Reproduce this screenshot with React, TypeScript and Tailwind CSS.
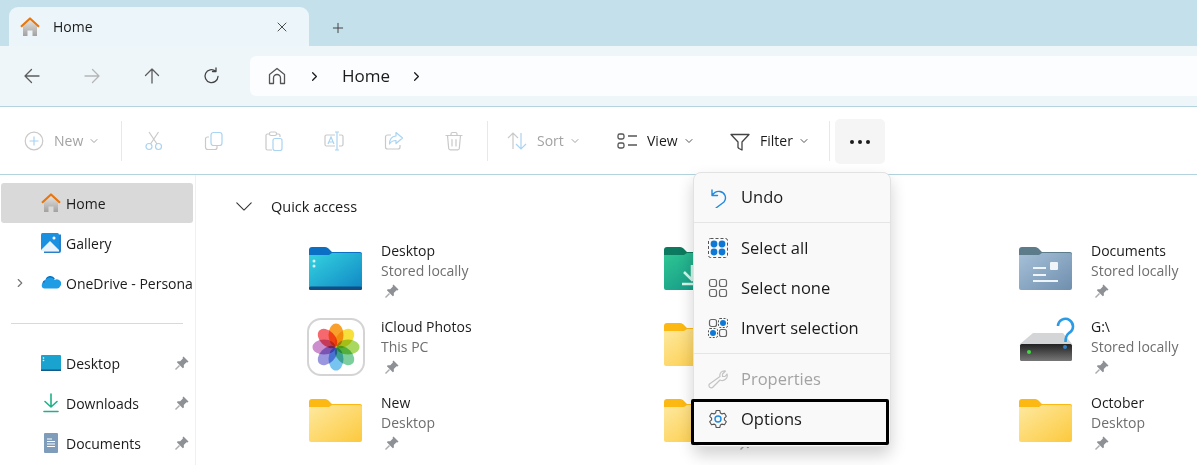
import { ChevronDown, ChevronRight, Plus, X } from 'lucide-react'
import type { ReactNode } from 'react'

const blue = '#a9d4f2'
const grey = '#c9c9c9'

function HomeColor({ size = 20 }: { size?: number }) {
  return (
    <svg width={size} height={size} viewBox="0 0 20 20" className="shrink-0">
      <defs>
        <linearGradient id="hg" x1="0" y1="0" x2="0" y2="1">
          <stop offset="0" stopColor="#e4e2e0" />
          <stop offset="1" stopColor="#a3a1a0" />
        </linearGradient>
      </defs>
      <path d="M3 9.500 10 3l7 6.500V19h-4.500v-5.500h-5V19H3z" fill="url(#hg)" />
      <path d="M1 9.800 10 1.500l9 8.300" fill="none" stroke="#e8760c" strokeWidth="2.200" strokeLinejoin="round" />
    </svg>
  )
}

function Line({ d, color = '#5c5c5c', size = 20, sw = 1.3 }: { d: string; color?: string; size?: number; sw?: number }) {
  return (
    <svg width={size} height={size} viewBox="0 0 20 20" fill="none" stroke={color} strokeWidth={sw} strokeLinecap="round" strokeLinejoin="round" className="shrink-0">
      <path d={d} />
    </svg>
  )
}

function Pin({ size = 16 }: { size?: number }) {
  return (
    <svg width={size} height={size} viewBox="0 0 16 16">
      <path d="M9.500 1.500 14.500 6.500 13.500 7.500 12.500 7.200 9.800 9.900 9.900 12.500 8.800 13.200 2.900 7.300 3.600 6.200 6.200 6.300 8.900 3.600 8.600 2.500z" fill="#8d9094" />
      <path d="M5.500 10.500 1.500 14.500" stroke="#a9abad" strokeWidth="1.400" />
    </svg>
  )
}

function Folder({ id, tab, top, bottom, children }: { id: string; tab: string; top: string; bottom: string; children?: ReactNode }) {
  return (
    <svg width="58" height="60" viewBox="0 0 58 60">
      <defs>
        <linearGradient id={id} x1="0" y1="0" x2="1" y2="1">
          <stop offset="0" stopColor={top} />
          <stop offset="1" stopColor={bottom} />
        </linearGradient>
      </defs>
      <path d="M2 9a3 3 0 0 1 3-3h13c2 0 3 1 4 2l3 3h28a2 2 0 0 1 2 2v6H2z" fill={tab} />
      <path d="M2 14l20 0 3-2h28a2 2 0 0 1 2 2v33a2 2 0 0 1-2 2H4a2 2 0 0 1-2-2z" fill={`url(#${id})`} />
      {children}
    </svg>
  )
}

function Photos() {
  const petals = ['#f9a02c', '#f7e03c', '#a9d860', '#7ccf9c', '#78c4f0', '#9a96e0', '#cc8ecc', '#f5686e']
  return (
    <svg width="58" height="60" viewBox="0 0 58 60">
      <rect x="1" y="2" width="56" height="56" rx="13" fill="#fff" stroke="#d4d4d4" strokeWidth="2" />
      {petals.map((c, i) => (
        <ellipse key={c} cx="29" cy="18" rx="7.500" ry="11.500" fill={c} className="mix-blend-multiply" transform={`rotate(${i * 45} 29 30)`} />
      ))}
    </svg>
  )
}

function Drive() {
  return (
    <svg width="58" height="60" viewBox="0 0 58 60">
      <defs>
        <linearGradient id="dr" x1="0" y1="0" x2="0" y2="1">
          <stop offset="0" stopColor="#222" />
          <stop offset="1" stopColor="#777" />
        </linearGradient>
      </defs>
      <path d="M3 27 16 16h30l9 11z" fill="#d3d5d7" />
      <rect x="3" y="27" width="52" height="17" rx="1.500" fill="url(#dr)" />
      <circle cx="12" cy="35" r="2" fill="#3fdc3f" />
      <circle cx="48" cy="30" r="2" fill="#2f80c8" />
      <path d="M41 9a7.500 7.500 0 1 1 11 7c-2 1.500-3.500 3-3.500 9" fill="none" stroke="#2b9be6" strokeWidth="2.600" />
    </svg>
  )
}

function Tool({ children, w = 'w-[60px]' }: { children: ReactNode; w?: string }) {
  return <div className={`${w} flex justify-center`}>{children}</div>
}

function Sep() {
  return <div className="h-[40px] w-px bg-[#e8e8e8]" />
}

function Labeled({ icon, label, muted, className }: { icon: ReactNode; label: string; muted?: boolean; className: string }) {
  return (
    <div className={`flex items-center ${className}`}>
      {icon}
      <span className={`ml-[10px] text-[14px] ${muted ? 'text-[#a3a3a3]' : 'text-[#1b1b1b]'}`}>{label}</span>
      <ChevronDown size={12} className={`ml-[5px] ${muted ? 'text-[#a3a3a3]' : 'text-[#555]'}`} />
    </div>
  )
}

function SideRow({ icon, label, pin, arrow, active }: { icon: ReactNode; label: string; pin?: boolean; arrow?: boolean; active?: boolean }) {
  return (
    <div className={`flex h-[40px] items-center rounded-[3px] ${active ? 'bg-[#d9d9d9]' : ''}`}>
      <div className="flex w-[40px] justify-center pr-[2px]">
        {arrow && <ChevronRight size={14} className="text-[#777]" />}
      </div>
      <div className="flex w-[20px] justify-center">{icon}</div>
      <span className="ml-[5px] min-w-0 flex-1 whitespace-nowrap text-[14px] text-[#1b1b1b]">{label}</span>
      {pin && <div className="mr-[3px]"><Pin /></div>}
    </div>
  )
}

function Item({ icon, name, sub }: { icon: ReactNode; name: string; sub: string }) {
  return (
    <div className="flex h-[76px] pt-[3px]">
      <div className="h-[60px] w-[58px]">{icon}</div>
      <div className="ml-[16px] whitespace-nowrap text-[14px] leading-[20px]">
        <div className="h-[20px] text-[#1b1b1b]">{name}</div>
        <div className="h-[20px] text-[#6e6e6e]">{sub}</div>
        <div className="flex h-[20px] items-center pl-[3px]"><Pin /></div>
      </div>
    </div>
  )
}

function MenuRow({ icon, label, muted }: { icon: ReactNode; label: string; muted?: boolean }) {
  return (
    <div className="flex h-[40px] items-center">
      <div className="ml-[14px] flex w-[20px] justify-center">{icon}</div>
      <span className={`ml-[13px] text-[16.500px] ${muted ? 'text-[#a3a3a3]' : 'text-[#1b1b1b]'}`}>{label}</span>
    </div>
  )
}

function Dots({ filled }: { filled: number[] }) {
  const pos = [[5, 5], [15, 5], [5, 15], [15, 15]]
  return (
    <svg width="20" height="20" viewBox="0 0 20 20">
      {pos.map(([x, y], i) =>
        filled.includes(i) ? (
          <g key={i}>
            <rect x={x - 4.500} y={y - 4.500} width="9" height="9" rx="1.500" fill="none" stroke="#555" strokeDasharray="2 1.500" />
            <circle cx={x} cy={y} r="3" fill="#0f78d4" />
          </g>
        ) : (
          <rect key={i} x={x - 3.500} y={y - 3.500} width="7" height="7" rx="2" fill="none" stroke="#666" strokeWidth="1.200" />
        ),
      )}
    </svg>
  )
}

export default function App() {
  return (
    <div className="relative flex h-[465px] w-[1197px] flex-col overflow-hidden bg-white font-['Open_Sans',sans-serif]">
      {/* Tabs */}
      <div className="flex h-[46px] shrink-0 bg-[#c4e1eb] pl-[9px] pt-[7px]">
        <div className="flex h-[39px] w-[300px] items-center rounded-t-[9px] bg-[#ecf5f9] pl-[11px] pr-[19px]">
          <HomeColor />
          <span className="ml-[13px] flex-1 text-[14px] font-medium text-[#1b1b1b]">Home</span>
          <X size={16} strokeWidth={1.300} className="shrink-0 text-[#333]" />
        </div>
        <Plus size={16} strokeWidth={1.500} className="ml-[21px] mt-[13px] text-[#444]" />
      </div>

      {/* Address row */}
      <div className="flex h-[61px] shrink-0 items-center border-b border-[#b3d3de] bg-[#eef6f9]">
        <div className="flex w-[250px] pl-[2px]">
          <Tool><Line d="M17 10H3M9.500 3.500 3 10l6.500 6.500" /></Tool>
          <Tool><Line d="M3 10h14M10.500 3.500 17 10l-6.500 6.500" color="#b5b5b5" /></Tool>
          <Tool><Line d="M10 17V3M3.500 9.500 10 3l6.500 6.500" /></Tool>
          <Tool><Line d="M16 10.500A6.500 6.500 0 1 1 13.500 5M14 2v3.500h-3.500" color="#444" /></Tool>
        </div>
        <div className="flex h-[40px] flex-1 items-center rounded-l-[6px] bg-[#fbfdfe] pl-[17px] text-[#1b1b1b]">
          <Line d="M2.500 17.500V8.500L10 2.500l7.500 6v9h-4V12a3.500 3.500 0 0 0-7 0v5.500z" color="#555" />
          <ChevronRight size={15} className="ml-[20px]" />
          <span className="ml-[20px] text-[17px]">Home</span>
          <ChevronRight size={15} className="ml-[19px]" />
        </div>
      </div>

      {/* Toolbar */}
      <div className="flex h-[68px] shrink-0 items-center border-b border-[#b3d3de]">
        <Labeled
          className="ml-[24px] w-[97px]"
          label="New"
          muted
          icon={
            <svg width="20" height="20" viewBox="0 0 20 20" fill="none">
              <circle cx="10" cy="10" r="8.800" stroke={grey} strokeWidth="1.200" />
              <path d="M10 5.500v9M5.500 10h9" stroke={blue} strokeWidth="1.200" />
            </svg>
          }
        />
        <Sep />
        <div className="ml-[2px] flex">
          <Tool>
            <svg width="20" height="20" viewBox="0 0 20 20" fill="none" stroke={blue} strokeWidth="1.200">
              <circle cx="5" cy="15.500" r="3" />
              <circle cx="14.500" cy="15.500" r="3" />
              <path d="M6.500 13 14.500 1M13 13 5 1" stroke={grey} />
            </svg>
          </Tool>
          <Tool>
            <svg width="20" height="20" viewBox="0 0 20 20" fill="none" strokeWidth="1.200">
              <path d="M5 6H3.500A2 2 0 0 0 1.500 8v8a2.500 2.500 0 0 0 2.500 2.500h7a2 2 0 0 0 2-2V15" stroke={grey} />
              <rect x="7" y="1.500" width="11" height="13" rx="2.500" stroke={blue} />
            </svg>
          </Tool>
          <Tool>
            <svg width="20" height="20" viewBox="0 0 20 20" fill="none" strokeWidth="1.200">
              <path d="M5 3H3.500A1.500 1.500 0 0 0 2 4.500v13A1.500 1.500 0 0 0 3.500 19H8M13 3h1.500A1.500 1.500 0 0 1 16 4.500V6" stroke={grey} />
              <rect x="5.500" y="1" width="7" height="3.500" rx="1.500" stroke={grey} />
              <rect x="9" y="7.500" width="9" height="12" rx="2" stroke={blue} />
            </svg>
          </Tool>
          <Tool>
            <svg width="20" height="20" viewBox="0 0 20 20" fill="none" strokeWidth="1.200">
              <path d="M11 4H2.500A1.500 1.500 0 0 0 1 5.500v8A1.500 1.500 0 0 0 2.500 15H11M15 4h2.500A1.500 1.500 0 0 1 19 5.500v8a1.500 1.500 0 0 1-1.500 1.500H15" stroke={grey} />
              <path d="M4 13 7 6l3 7M5 11h4M13 1v18M11 1h4M11 19h4" stroke={blue} />
            </svg>
          </Tool>
          <Tool>
            <svg width="20" height="20" viewBox="0 0 20 20" fill="none" strokeWidth="1.200" strokeLinejoin="round">
              <path d="M7 4H3.500A2 2 0 0 0 1.500 6v10a2 2 0 0 0 2 2H14a2 2 0 0 0 2-2v-2" stroke={grey} />
              <path d="M12 1.500 18.500 7 12 12.500V9.500c-3 0-5 1-6.500 3.500 0-4.500 2.500-7.500 6.500-8z" stroke={blue} />
            </svg>
          </Tool>
          <Tool>
            <svg width="20" height="20" viewBox="0 0 20 20" fill="none" stroke={grey} strokeWidth="1.200" strokeLinecap="round">
              <path d="M2 4.500h16M7 4.500V3a1.500 1.500 0 0 1 1.500-1.500h3A1.500 1.500 0 0 1 13 3v1.500M3.500 4.500l1.200 13a1.500 1.500 0 0 0 1.500 1.300h7.600a1.500 1.500 0 0 0 1.500-1.300l1.200-13M8 8.500v6.500M12 8.500v6.500" />
            </svg>
          </Tool>
        </div>
        <div className="ml-[3px]"><Sep /></div>
        <Labeled
          className="ml-[19px] w-[110px]"
          label="Sort"
          muted
          icon={
            <svg width="20" height="20" viewBox="0 0 20 20" fill="none" strokeWidth="1.200">
              <path d="M6 18V2M1 7l5-5 5 5" stroke={grey} />
              <path d="M14 2v16M9 13l5 5 5-5" stroke={blue} />
            </svg>
          }
        />
        <Labeled
          className="w-[113px]"
          label="View"
          icon={
            <svg width="20" height="20" viewBox="0 0 20 20" fill="none" stroke="#555" strokeWidth="1.300">
              <rect x="1" y="3" width="6" height="5" rx="1.800" />
              <rect x="1" y="12" width="6" height="5" rx="1.800" />
              <path d="M11 5h9M11 14h9" />
            </svg>
          }
        />
        <Labeled
          className="w-[99px]"
          label="Filter"
          icon={<Line d="M1 3.500h18l-7 7.500v8l-3-1.500-1-1V11z" color="#444" />}
        />
        <Sep />
        <div className="ml-[5px] mt-[2px] flex h-[45px] w-[50px] items-center justify-center gap-[4px] rounded-[5px] bg-[#f5f5f5]">
          <span className="size-[4px] rounded-full bg-[#1b1b1b]" />
          <span className="size-[4px] rounded-full bg-[#1b1b1b]" />
          <span className="size-[4px] rounded-full bg-[#1b1b1b]" />
        </div>
      </div>

      {/* Body */}
      <div className="flex min-h-0 flex-1">
        <aside className="w-[196px] shrink-0 border-r border-[#f0f0f0] pl-[1px] pr-[2px] pt-[8px]">
          <SideRow active label="Home" icon={<HomeColor />} />
          <SideRow
            label="Gallery"
            icon={
              <svg width="20" height="20" viewBox="0 0 20 20">
                <path d="M18 1.500h2V18a2 2 0 0 1-2 2H3v-1.500h15z" fill="#2a7fc9" />
                <rect width="18" height="18" rx="1.500" fill="#1c90e0" />
                <path d="M0 17 9 8l9 9v1H0z" fill="#e9f3fb" />
                <circle cx="13" cy="5" r="1.500" fill="#fff" />
              </svg>
            }
          />
          <SideRow
            arrow
            label="OneDrive - Persona"
            icon={
              <svg width="20" height="20" viewBox="0 0 20 20">
                <path d="M5 14.500A3.800 3.800 0 0 1 4.500 7a5 5 0 0 1 9.300-1.500L9 14.500z" fill="#0a6fc2" />
                <path d="M4 15.500a3 3 0 0 1-.5-6 5.500 5.500 0 0 1 10-2.500 4.300 4.300 0 0 1 5.500 6.500c-.5 1.200-1.500 2-2.800 2z" fill="#1f9de4" />
              </svg>
            }
          />
          <div className="mx-[10px] mb-[19px] mt-[20px] h-px bg-[#d9d9d9]" />
          <SideRow
            pin
            label="Desktop"
            icon={
              <svg width="20" height="20" viewBox="0 0 20 20">
                <rect y="2" width="20" height="16" rx="1" fill="#1ba3cf" />
                <rect x="0" y="16.500" width="20" height="1.500" fill="#155a8a" />
                <circle cx="2.500" cy="5" r=".8" fill="#fff" />
                <circle cx="2.500" cy="7.500" r=".8" fill="#fff" />
              </svg>
            }
          />
          <SideRow pin label="Downloads" icon={<Line d="M10 1v13M4 8.500 10 14l6-5.500M3 18.500h14" color="#20b08a" sw={1.600} />} />
          <SideRow
            pin
            label="Documents"
            icon={
              <svg width="20" height="20" viewBox="0 0 20 20">
                <rect x="3" width="14" height="20" rx="1" fill="#7f9dbb" />
                <path d="M6 6h5M6 8.500h8M6 11h8M6 13.500h8" stroke="#fff" strokeWidth="1" />
              </svg>
            }
          />
        </aside>

        <main className="min-w-0 flex-1">
          <div className="flex h-[63px] items-center pb-[1px] pl-[39px]">
            <Line d="M2 6.500 10 14.500 18 6.500" color="#333" size={18} sw={1.200} />
            <span className="ml-[18px] mt-[2px] text-[14.500px] font-medium text-[#1b1b1b]">Quick access</span>
          </div>
          <div className="grid grid-cols-[355px_355px_1fr] pl-[111px]">
            <Item
              name="Desktop"
              sub="Stored locally"
              icon={
                <Folder id="f1" tab="#0b6fc4" top="#35d3e0" bottom="#0f86c4">
                  <rect x="2" y="45.500" width="53" height="3.500" rx="1.500" fill="#0f4f85" />
                  <circle cx="7" cy="20" r="1.500" fill="#d8f6fa" />
                  <circle cx="7" cy="25" r="1.500" fill="#d8f6fa" />
                </Folder>
              }
            />
            <Item
              name=""
              sub=""
              icon={
                <Folder id="f2" tab="#0c7a5e" top="#2fc693" bottom="#0f8f84">
                  <path d="M30 24v15M22 31l8 8 8-8M20 43h20" stroke="#d7f5ea" strokeWidth="2.500" fill="none" />
                </Folder>
              }
            />
            <Item
              name="Documents"
              sub="Stored locally"
              icon={
                <Folder id="f3" tab="#5c7c8c" top="#a6c0d8" bottom="#6f8fae">
                  <path d="M16 27h13M16 34h13M16 40h25" stroke="#eef4f8" strokeWidth="2.200" />
                  <rect x="33" y="21" width="8" height="8" rx="1" fill="#eef4f8" />
                </Folder>
              }
            />
            <Item name="iCloud Photos" sub="This PC" icon={<Photos />} />
            <Item name="" sub="" icon={<Folder id="f4" tab="#fdb913" top="#fee9a0" bottom="#fcc93d" />} />
            <Item name="G:\" sub="Stored locally" icon={<Drive />} />
            <Item name="New" sub="Desktop" icon={<Folder id="f5" tab="#fdb913" top="#fee9a0" bottom="#fcc93d" />} />
            <Item name="" sub="" icon={<Folder id="f6" tab="#fdb913" top="#fee9a0" bottom="#fcc93d" />} />
            <Item name="October" sub="Desktop" icon={<Folder id="f7" tab="#fdb913" top="#fee9a0" bottom="#fcc93d" />} />
          </div>
        </main>
      </div>

      {/* More options menu */}
      <div className="absolute left-[693px] top-[172px] w-[198px] rounded-[8px] border border-[#e2e2e2] bg-[#f9f9f9] shadow-[0_8px_16px_rgba(0,0,0,0.18)]">
        <div className="flex h-[50px] items-center border-b border-[#e5e5e5]">
          <div className="ml-[14px] flex w-[20px] justify-center">
            <Line d="M4 2v5.500h5.500M4 7.500C6 4.500 9 3 12 3.500a6.500 6.500 0 0 1 4 10.500L8 20" color="#1f8ae0" sw={1.400} />
          </div>
          <span className="ml-[13px] text-[16.500px] text-[#1b1b1b]">Undo</span>
        </div>
        <div className="flex h-[131px] flex-col justify-center border-b border-[#e5e5e5]">
          <MenuRow
            label="Select all"
            icon={
              <svg width="20" height="20" viewBox="0 0 20 20">
                <rect x=".5" y=".5" width="19" height="19" rx="2" fill="none" stroke="#555" strokeDasharray="3 2" />
                <circle cx="6" cy="6" r="3.400" fill="#0f78d4" />
                <circle cx="14" cy="6" r="3.400" fill="#0f78d4" />
                <circle cx="6" cy="14" r="3.400" fill="#0f78d4" />
                <circle cx="14" cy="14" r="3.400" fill="#0f78d4" />
              </svg>
            }
          />
          <MenuRow label="Select none" icon={<Dots filled={[]} />} />
          <MenuRow label="Invert selection" icon={<Dots filled={[1, 2]} />} />
        </div>
        <div className="h-[5px]" />
        <MenuRow
          muted
          label="Properties"
          icon={<Line d="M12 7.500a4.500 4.500 0 0 1 5.500-5.500L14.500 5v2.500H17l2-2.500a5 5 0 0 1-7 6L5 18a2 2 0 0 1-3.500-3z" color="#c4c4c4" sw={1.200} />}
        />
        <MenuRow
          label="Options"
          icon={
            <svg width="20" height="20" viewBox="0 0 20 20" fill="none">
              <path d="M8.200 1.500h3.600l.6 2.500 1.600.9 2.500-.7 1.800 3.100-1.900 1.800v1.800l1.900 1.800-1.800 3.100-2.500-.7-1.600.9-.6 2.500H8.200l-.6-2.500-1.600-.9-2.500.7-1.800-3.100L3.600 10.900V9.100L1.700 7.300l1.800-3.100 2.500.7 1.600-.9z" stroke="#555" strokeWidth="1.100" strokeLinejoin="round" />
              <circle cx="10" cy="10" r="3" stroke="#1f8ae0" strokeWidth="1.400" />
            </svg>
          }
        />
        <div className="h-[7px]" />
      </div>
      {/* Annotation box around Options */}
      <div className="absolute left-[691px] top-[399px] h-[46px] w-[198px] rounded-[2px] border-[3px] border-black" />
    </div>
  )
}
